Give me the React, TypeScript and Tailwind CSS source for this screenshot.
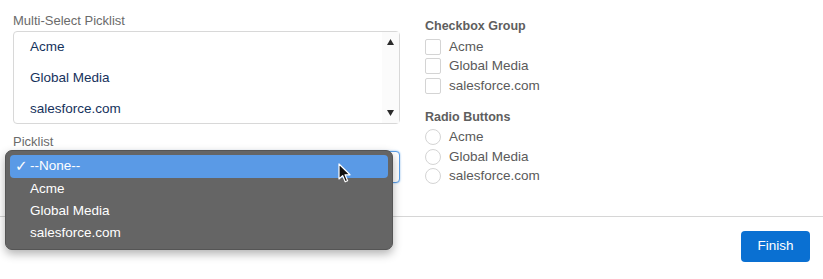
import React from "react";

const options = ["Acme", "Global Media", "salesforce.com"];

const CheckboxRow = ({ label }: { label: string }) => (
  <div className="flex h-[19.5px] items-center gap-2">
    <span className="h-4 w-4 rounded-[2px] border border-[#d4d4d4] bg-white" />
    <span className="text-[13.5px] text-[#5a5a5a]">{label}</span>
  </div>
);

const RadioRow = ({ label }: { label: string }) => (
  <div className="flex h-[19.5px] items-center gap-2">
    <span className="h-4 w-4 rounded-full border border-[#d4d4d4] bg-white" />
    <span className="text-[13.5px] text-[#5a5a5a]">{label}</span>
  </div>
);

const Cursor = () => (
  <svg width="14" height="21" viewBox="0 0 14 21" className="absolute left-[338px] top-[163px]">
    <path
      d="M1 1 L1 16 L4.6 12.6 L7.2 18.8 L9.6 17.8 L7 11.8 L12 11.8 Z"
      fill="#111"
      stroke="#fff"
      strokeWidth="1.2"
      strokeLinejoin="round"
    />
  </svg>
);

export default function App() {
  return (
    <div className="relative h-[279px] w-[823px] overflow-hidden bg-white font-['Liberation_Sans',Arial,sans-serif]">
      <div className="flex h-[216px] px-[13px] pt-[13px]">
        {/* left column */}
        <div className="w-[387px]">
          <div className="text-[13px] leading-4 text-[#6b6b6b]">Multi-Select Picklist</div>
          <div className="mt-[2px] flex h-[93px] rounded-[4px] border border-[#d8d8d8] bg-white">
            <div className="flex-1 pl-4">
              {options.map((o) => (
                <div key={o} className="flex h-[31px] items-center text-[13.5px] text-[#16325c]">
                  {o}
                </div>
              ))}
            </div>
            <div className="flex w-[17px] flex-col items-center justify-between bg-[#fbfbfb] py-[7px]">
              <svg width="7" height="6" viewBox="0 0 7 6">
                <path d="M3.5 0 L7 6 L0 6 Z" fill="#2b2b2b" />
              </svg>
              <svg width="7" height="6" viewBox="0 0 7 6">
                <path d="M0 0 L7 0 L3.5 6 Z" fill="#2b2b2b" />
              </svg>
            </div>
          </div>
          <div className="mt-[10px] text-[13px] leading-4 text-[#6b6b6b]">Picklist</div>
          <div className="mt-px h-[32px] rounded-[4px] border border-[#5a9fe8] bg-white shadow-[0_0_2px_#7fb6f0]" />
        </div>

        {/* right column */}
        <div className="ml-[25px] pt-[5px]">
          <div className="text-[12.5px] font-bold leading-4 text-[#5e5e5e]">Checkbox Group</div>
          <div className="mt-[3px]">
            {options.map((o) => (
              <CheckboxRow key={o} label={o} />
            ))}
          </div>
          <div className="mt-[13px] text-[12.5px] font-bold leading-4 text-[#5e5e5e]">Radio Buttons</div>
          <div className="mt-[3px]">
            {options.map((o) => (
              <RadioRow key={o} label={o} />
            ))}
          </div>
        </div>
      </div>

      {/* footer */}
      <div className="flex justify-end border-t border-[#d6d6d6] pr-[13px] pt-[14px]">
        <button className="h-[31px] w-[69px] rounded-[4px] bg-[#0a70d2] text-[13.5px] text-white">
          Finish
        </button>
      </div>

      {/* open picklist menu */}
      <div className="absolute left-[5px] top-[150px] w-[388px] rounded-[7px] border border-[#555] bg-[#656565] px-[4px] pb-[5px] pt-[4px] shadow-[0_4px_10px_rgba(0,0,0,0.3)]">
        <div className="flex h-[23px] items-center rounded-[4px] bg-[#5a9ae6] pl-[5px] text-[13.5px] text-white">
          <span className="w-[15px] font-['DejaVu_Sans',sans-serif] text-[15px] leading-none">✓</span>
          <span>--None--</span>
        </div>
        {options.map((o) => (
          <div key={o} className="flex h-[22px] items-center pl-[20px] text-[13.5px] text-white">
            {o}
          </div>
        ))}
      </div>
      <Cursor />
    </div>
  );
}
